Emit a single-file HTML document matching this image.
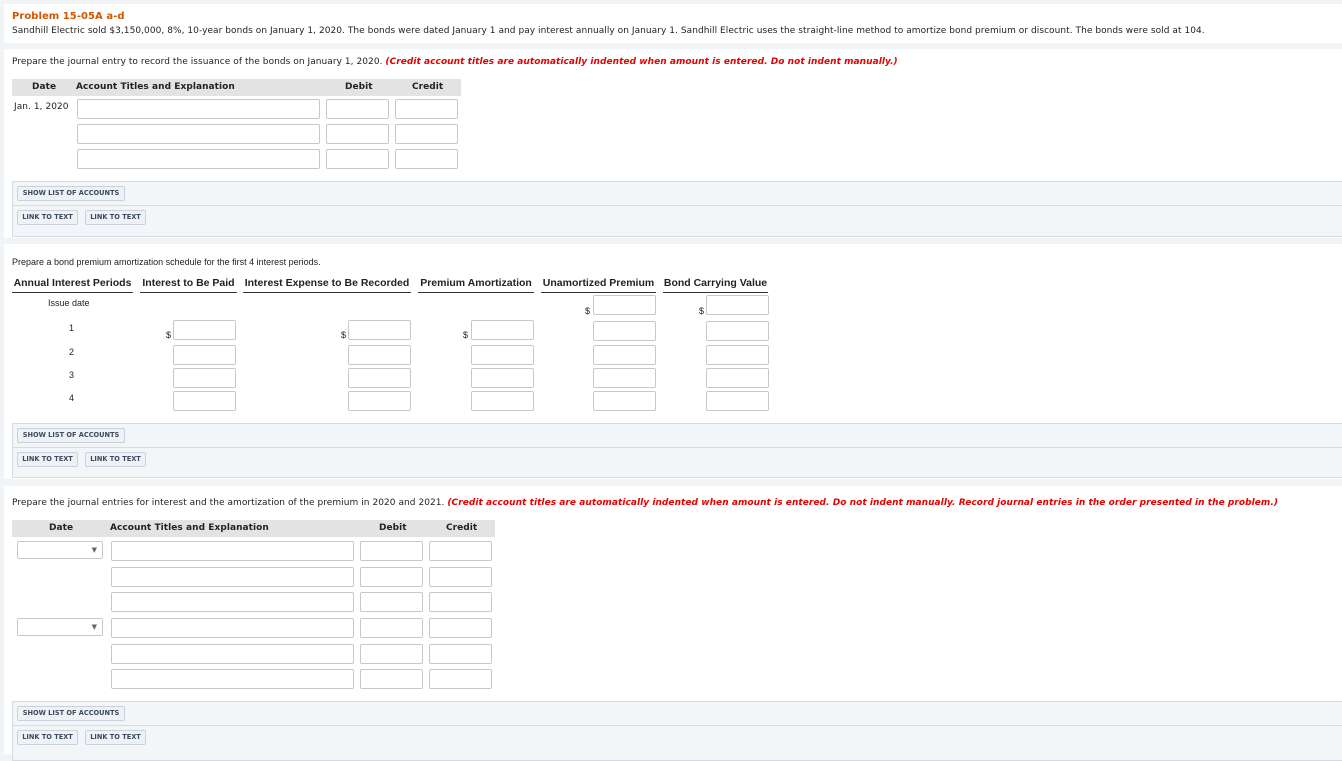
<!DOCTYPE html>
<html><head><meta charset="utf-8"><style>
*{box-sizing:border-box;margin:0;padding:0}
body{width:1342px;height:754px;background:#f1f4f7;position:relative;overflow:hidden;font-family:"DejaVu Sans","Liberation Sans",sans-serif;font-size:9px;letter-spacing:0.05px;color:#222}
.a{position:absolute}
.p{position:absolute;left:4px;right:0;background:#fff}
.in{position:absolute;height:20px;border:1px solid #c8c8c8;border-radius:2px;background:#fff}
.hb{position:absolute;background:#e3e3e3;height:17px}
.b{font-weight:bold}
.gray{position:absolute;left:12px;right:0;background:#f3f6f9;border:1px solid #d5dbe1;border-right:none}
.sep{position:absolute;left:12px;right:0;height:1px;background:#d5dbe1}
.btn{position:absolute;height:15px;border:1px solid #c9d2dc;border-radius:2px;background:#eef2f6;color:#3b4a5c;font-size:6.6px;letter-spacing:0;font-weight:bold;line-height:13px;text-align:center;white-space:nowrap}
.s{width:108px}.l{width:61px}
.red{color:#e60000;font-style:italic;font-weight:bold}
.sch{font-family:"Liberation Sans",sans-serif;font-size:9px;letter-spacing:0}
.h{position:absolute;top:277px;font-family:"Liberation Sans",sans-serif;font-weight:bold;font-size:10.5px;letter-spacing:0;border-bottom:1px solid #333;height:16px;white-space:nowrap;text-align:center}
.sel::after{content:"▼";position:absolute;right:5px;top:4px;font-size:7px;color:#666}
</style></head><body>

<div class="p" style="top:4px;height:39px"></div>
<div class="a b" style="left:12px;top:11px;color:#d45500;font-size:10px">Problem 15-05A a-d</div>
<div class="a" style="left:12px;top:26px;white-space:nowrap">Sandhill Electric sold $3,150,000, 8%, 10-year bonds on January 1, 2020. The bonds were dated January 1 and pay interest annually on January 1. Sandhill Electric uses the straight-line method to amortize bond premium or discount. The bonds were sold at 104.</div>

<div class="p" style="top:49px;height:189px"></div>
<div class="a" style="left:12px;top:57px;white-space:nowrap">Prepare the journal entry to record the issuance of the bonds on January 1, 2020. <span class="red">(Credit account titles are automatically indented when amount is entered. Do not indent manually.)</span></div>
<div class="hb" style="left:12px;top:79px;width:449px"></div>
<div class="a b" style="left:32px;top:82px">Date</div>
<div class="a b" style="left:76px;top:82px">Account Titles and Explanation</div>
<div class="a b" style="left:345px;top:82px">Debit</div>
<div class="a b" style="left:412px;top:82px">Credit</div>
<div class="a" style="left:14px;top:102px">Jan. 1, 2020</div>
<div class="in" style="left:77px;top:99px;width:243px"></div><div class="in" style="left:326px;top:99px;width:63px"></div><div class="in" style="left:395px;top:99px;width:63px"></div>
<div class="in" style="left:77px;top:124px;width:243px"></div><div class="in" style="left:326px;top:124px;width:63px"></div><div class="in" style="left:395px;top:124px;width:63px"></div>
<div class="in" style="left:77px;top:149px;width:243px"></div><div class="in" style="left:326px;top:149px;width:63px"></div><div class="in" style="left:395px;top:149px;width:63px"></div>
<div class="gray" style="top:181px;height:56px"></div><div class="sep" style="top:205px"></div>
<div class="btn s" style="left:17px;top:186px">SHOW LIST OF ACCOUNTS</div>
<div class="btn l" style="left:17px;top:210px">LINK TO TEXT</div>
<div class="btn l" style="left:85px;top:210px">LINK TO TEXT</div>

<div class="p" style="top:244px;height:235px"></div>
<div class="a sch" style="left:12px;top:257px">Prepare a bond premium amortization schedule for the first 4 interest periods.</div>
<div class="h" style="left:12px;width:121px">Annual Interest Periods</div>
<div class="h" style="left:140px;width:97px">Interest to Be Paid</div>
<div class="h" style="left:243px;width:168px">Interest Expense to Be Recorded</div>
<div class="h" style="left:418px;width:116px">Premium Amortization</div>
<div class="h" style="left:541px;width:115px">Unamortized Premium</div>
<div class="h" style="left:663px;width:105px">Bond Carrying Value</div>
<div class="a sch" style="left:48px;top:298px">Issue date</div>
<div class="a sch" style="left:69px;top:323px">1</div>
<div class="a sch" style="left:69px;top:347px">2</div>
<div class="a sch" style="left:69px;top:370px">3</div>
<div class="a sch" style="left:69px;top:393px">4</div>
<div class="a sch" style="left:585px;top:306px">$</div><div class="a sch" style="left:699px;top:306px">$</div>
<div class="a sch" style="left:166px;top:330px">$</div><div class="a sch" style="left:341px;top:330px">$</div><div class="a sch" style="left:463px;top:330px">$</div>
<div class="in" style="left:593px;top:295px;width:63px"></div><div class="in" style="left:706px;top:295px;width:63px"></div>
<div class="in" style="left:173px;top:320px;width:63px"></div><div class="in" style="left:348px;top:320px;width:63px"></div><div class="in" style="left:471px;top:320px;width:63px"></div><div class="in" style="left:593px;top:321px;width:63px"></div><div class="in" style="left:706px;top:321px;width:63px"></div>
<div class="in" style="left:173px;top:345px;width:63px"></div><div class="in" style="left:348px;top:345px;width:63px"></div><div class="in" style="left:471px;top:345px;width:63px"></div><div class="in" style="left:593px;top:345px;width:63px"></div><div class="in" style="left:706px;top:345px;width:63px"></div>
<div class="in" style="left:173px;top:368px;width:63px"></div><div class="in" style="left:348px;top:368px;width:63px"></div><div class="in" style="left:471px;top:368px;width:63px"></div><div class="in" style="left:593px;top:368px;width:63px"></div><div class="in" style="left:706px;top:368px;width:63px"></div>
<div class="in" style="left:173px;top:391px;width:63px"></div><div class="in" style="left:348px;top:391px;width:63px"></div><div class="in" style="left:471px;top:391px;width:63px"></div><div class="in" style="left:593px;top:391px;width:63px"></div><div class="in" style="left:706px;top:391px;width:63px"></div>
<div class="gray" style="top:423px;height:55px"></div><div class="sep" style="top:447px"></div>
<div class="btn s" style="left:17px;top:428px">SHOW LIST OF ACCOUNTS</div>
<div class="btn l" style="left:17px;top:452px">LINK TO TEXT</div>
<div class="btn l" style="left:85px;top:452px">LINK TO TEXT</div>

<div class="p" style="top:486px;height:268px"></div>
<div class="a" style="left:12px;top:498px;white-space:nowrap">Prepare the journal entries for interest and the amortization of the premium in 2020 and 2021. <span class="red">(Credit account titles are automatically indented when amount is entered. Do not indent manually. Record journal entries in the order presented in the problem.)</span></div>
<div class="hb" style="left:12px;top:520px;width:483px"></div>
<div class="a b" style="left:49px;top:523px">Date</div>
<div class="a b" style="left:110px;top:523px">Account Titles and Explanation</div>
<div class="a b" style="left:379px;top:523px">Debit</div>
<div class="a b" style="left:446px;top:523px">Credit</div>
<div class="in sel" style="left:17px;top:541px;width:86px;height:18px"></div>
<div class="in sel" style="left:17px;top:618px;width:86px;height:18px"></div>
<div class="in" style="left:111px;top:541px;width:243px"></div><div class="in" style="left:360px;top:541px;width:63px"></div><div class="in" style="left:429px;top:541px;width:63px"></div>
<div class="in" style="left:111px;top:567px;width:243px"></div><div class="in" style="left:360px;top:567px;width:63px"></div><div class="in" style="left:429px;top:567px;width:63px"></div>
<div class="in" style="left:111px;top:592px;width:243px"></div><div class="in" style="left:360px;top:592px;width:63px"></div><div class="in" style="left:429px;top:592px;width:63px"></div>
<div class="in" style="left:111px;top:618px;width:243px"></div><div class="in" style="left:360px;top:618px;width:63px"></div><div class="in" style="left:429px;top:618px;width:63px"></div>
<div class="in" style="left:111px;top:644px;width:243px"></div><div class="in" style="left:360px;top:644px;width:63px"></div><div class="in" style="left:429px;top:644px;width:63px"></div>
<div class="in" style="left:111px;top:669px;width:243px"></div><div class="in" style="left:360px;top:669px;width:63px"></div><div class="in" style="left:429px;top:669px;width:63px"></div>
<div class="gray" style="top:701px;height:60px"></div><div class="sep" style="top:725px"></div>
<div class="btn s" style="left:17px;top:706px">SHOW LIST OF ACCOUNTS</div>
<div class="btn l" style="left:17px;top:730px">LINK TO TEXT</div>
<div class="btn l" style="left:85px;top:730px">LINK TO TEXT</div>
</body></html>
